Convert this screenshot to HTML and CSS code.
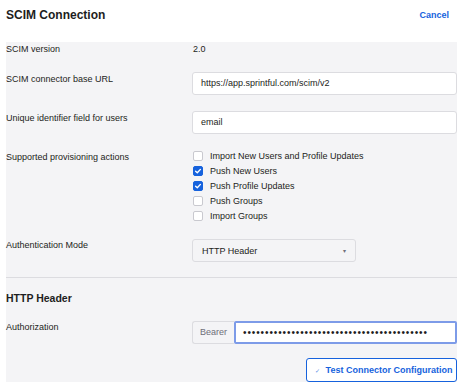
FILE: index.html
```html
<!DOCTYPE html>
<html lang="en">
<head>
  <meta charset="UTF-8" />
  <title>SCIM Connection</title>
  <link rel="stylesheet" href="styles.css">
</head>
<body>

  <div class="header">
    <h1>SCIM Connection</h1>
    <a class="cancel" href="#">Cancel</a>
  </div>

  <div class="panel">
    <div class="row row-version">
      <div class="label">SCIM version</div>
      <div class="value">2.0</div>
    </div>

    <div class="row row-text">
      <div class="label">SCIM connector base URL</div>
      <div class="field"><div class="input">https://app.sprintful.com/scim/v2</div></div>
    </div>

    <div class="row row-text">
      <div class="label">Unique identifier field for users</div>
      <div class="field"><div class="input">email</div></div>
    </div>

    <div class="row row-checks">
      <div class="label">Supported provisioning actions</div>
      <ul class="checks">
        <li><span class="box"></span>Import New Users and Profile Updates</li>
        <li><span class="box on"><svg viewBox="0 0 10 10"><path d="M2.6 5.2 L4.3 6.8 L7.4 3.4" fill="none" stroke="#fff" stroke-width="1.4" stroke-linecap="round" stroke-linejoin="round"/></svg></span>Push New Users</li>
        <li><span class="box on"><svg viewBox="0 0 10 10"><path d="M2.6 5.2 L4.3 6.8 L7.4 3.4" fill="none" stroke="#fff" stroke-width="1.4" stroke-linecap="round" stroke-linejoin="round"/></svg></span>Push Profile Updates</li>
        <li><span class="box"></span>Push Groups</li>
        <li><span class="box"></span>Import Groups</li>
      </ul>
    </div>

    <div class="row row-auth">
      <div class="label">Authentication Mode</div>
      <div class="field"><div class="select">HTTP Header<span class="caret">&#9662;</span></div></div>
    </div>

    <div class="section">
      <h2>HTTP Header</h2>
      <div class="row row-token">
        <div class="label">Authorization</div>
        <div class="field">
          <span class="addon">Bearer</span>
          <div class="input focus">&bull;&bull;&bull;&bull;&bull;&bull;&bull;&bull;&bull;&bull;&bull;&bull;&bull;&bull;&bull;&bull;&bull;&bull;&bull;&bull;&bull;&bull;&bull;&bull;&bull;&bull;&bull;&bull;&bull;&bull;&bull;&bull;&bull;&bull;&bull;&bull;&bull;&bull;&bull;&bull;&bull;&bull;</div>
        </div>
      </div>
      <div class="actions">
        <button class="btn"><span class="tick">&#10003;</span>Test Connector Configuration</button>
      </div>
    </div>
  </div>

</body>
</html>
```

FILE: styles.css
```css
body {
  margin: 0;
  background-color: #ffffff;
  font-family: 'Liberation Sans', Arial, sans-serif;
  font-size: 9px;
  color: #1d1d21;
}
.header {
  display: flex;
  justify-content: space-between;
  align-items: center;
  height: 30px;
  padding: 0 25px 0 6px;
  margin-bottom: 12px;
}
h1 {
  margin: 0;
  font-size: 12px;
  font-weight: bold;
}
.cancel {
  color: #1662dd;
  font-weight: bold;
  font-size: 9px;
  text-decoration: none;
}
.panel {
  margin-left: 6px;
  width: 451px;
  background-color: #f4f4f6;
}
.row {
  display: flex;
  align-items: flex-start;
}
.label {
  width: 186px;
  flex: none;
  line-height: 12px;
  margin-top: 1px;
}
.field {
  flex: 1;
  display: flex;
}
.input {
  flex: 1;
  height: 23px;
  box-sizing: border-box;
  border: 1px solid #dcdce0;
  border-radius: 3px;
  background-color: #ffffff;
  padding: 0 8px;
  line-height: 21px;
}
.row-version {
  height: 30px;
}
.row-version .label, .row-version .value {
  margin-top: 0;
  line-height: 14px;
}
.value {
  padding-left: 1px;
}
.row-text {
  height: 39px;
}
.row-checks {
  height: 89px;
}
.checks {
  list-style: none;
  margin: -2px 0 0 1px;
  padding: 0;
}
.checks li {
  display: flex;
  align-items: center;
  height: 15px;
}
.box {
  width: 10px;
  height: 10px;
  box-sizing: border-box;
  border: 1px solid #c9c9cf;
  border-radius: 2px;
  background-color: #ffffff;
  margin-right: 7px;
}
.box.on {
  background-color: #1662dd;
  border-color: #1662dd;
}
.box svg {
  display: block;
  width: 10px;
  height: 10px;
  margin: -1px;
}
.row-auth {
  height: 38px;
}
.row-auth .label {
  margin-top: 0;
}
.row-auth .field {
  flex: none;
  width: 164px;
}
.select {
  flex: 1;
  display: flex;
  justify-content: space-between;
  align-items: center;
  height: 23px;
  box-sizing: border-box;
  border: 1px solid #dcdce0;
  border-radius: 3px;
  background-color: #f4f4f6;
  padding: 0 9px;
}
.caret {
  font-size: 6px;
  color: #6e6e78;
}
.section {
  border-top: 1px solid #dcdce0;
}
h2 {
  margin: 0;
  padding: 13px 0 16px;
  line-height: 14px;
  font-size: 10.5px;
  font-weight: bold;
}
.row-token {
  height: 37px;
}
.row-token .label {
  margin-top: 0;
}
.addon {
  width: 42px;
  height: 23px;
  box-sizing: border-box;
  border: 1px solid #dcdce0;
  border-right: none;
  border-radius: 3px 0 0 3px;
  background-color: #f4f4f6;
  color: #6e6e78;
  text-align: center;
  line-height: 21px;
}
.input.focus {
  border: 2px solid #7d9be8;
  border-radius: 2px;
  line-height: 19px;
  font-size: 10px;
  letter-spacing: 0.9px;
  padding-left: 7px;
  overflow: hidden;
  white-space: nowrap;
}
.actions {
  display: flex;
  justify-content: flex-end;
}
.btn {
  width: 151px;
  height: 24px;
  border: 1px solid #1662dd;
  border-radius: 3px;
  background-color: #ffffff;
  color: #1662dd;
  font-family: inherit;
  font-size: 9px;
  font-weight: bold;
  padding: 0 0 0 4px;
}
.tick {
  font-size: 6px;
  margin-right: 6px;
  font-weight: normal;
  color: #5b8be6;
}
```
